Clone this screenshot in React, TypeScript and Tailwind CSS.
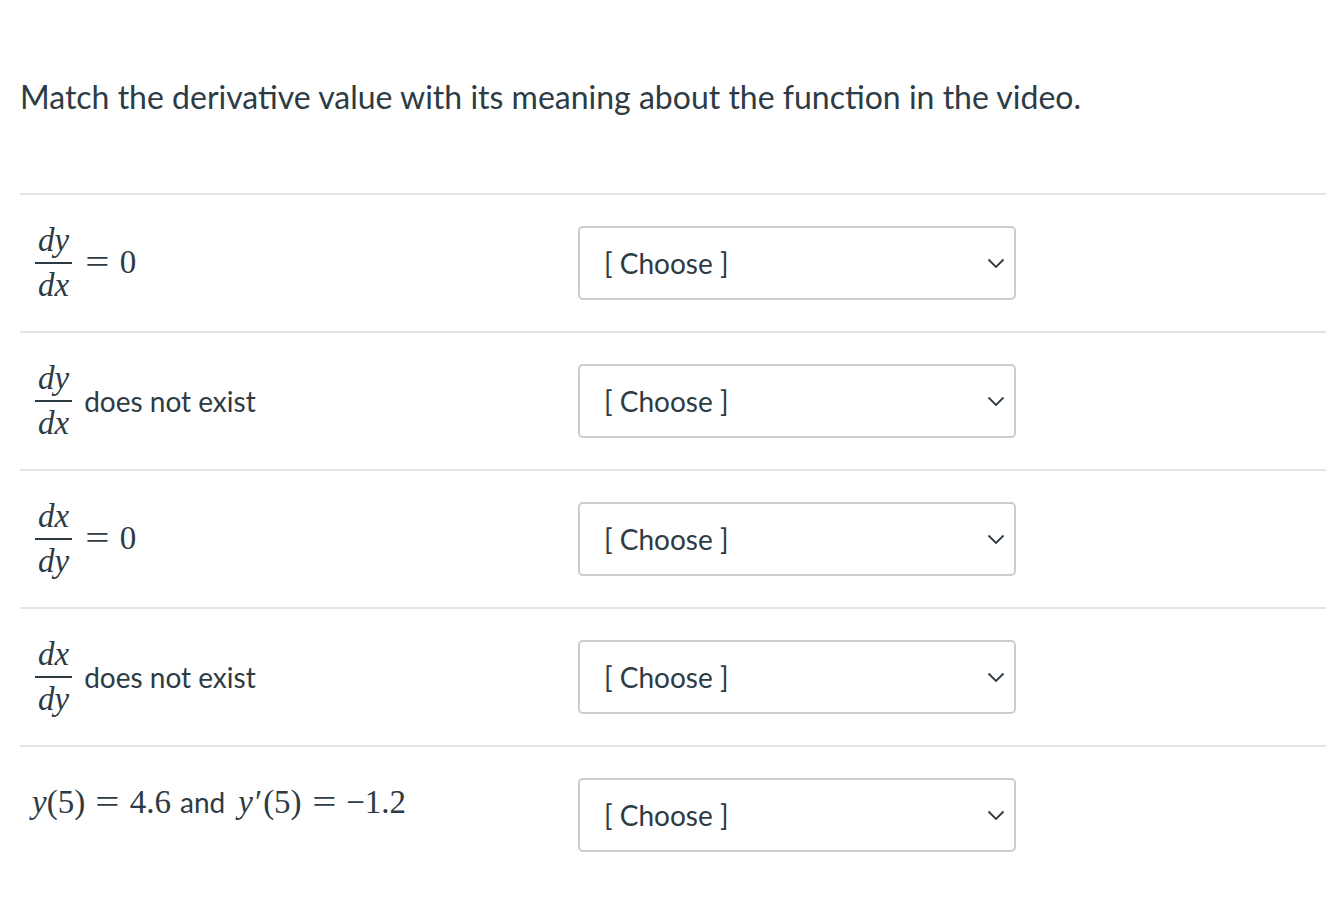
import React from "react";

const sans = { fontFamily: "Lato, 'Liberation Sans', sans-serif" };

const Frac = ({ top, bottom }: { top: string; bottom: string }) => (
  <span className="inline-flex flex-col items-center align-middle font-['Liberation_Serif',serif] italic text-[33px]">
    <span className="leading-none px-[3px] pb-[5px]">{top}</span>
    <span className="h-[1.5px] w-full bg-[#2d3b45]" />
    <span className="leading-none px-[3px] pt-[5px]">{bottom}</span>
  </span>
);

// math pieces, set in a serif face
const M = ({ children, italic }: { children: React.ReactNode; italic?: boolean }) => (
  <span className={`font-['Liberation_Serif',serif] text-[33px] ${italic ? "italic" : ""}`}>{children}</span>
);

const Eq = () => (
  <span className="mx-[13px] inline-block scale-x-[1.3] font-['Liberation_Serif',serif] text-[33px]">=</span>
);

const ChooseSelect = () => (
  <div className="flex h-[74px] w-[438px] shrink-0 items-center justify-between rounded-[5px] border-2 border-[#c7cdd1] bg-white pl-[24px] pr-[8px]">
    <span className="text-[28px] text-[#2d3b45]" style={sans}>
      [ Choose ]
    </span>
    <svg width="18" height="11" viewBox="0 0 18 11" fill="none" className="mr-[1px]">
      <path d="M1.5 1.5 L9 9 L16.5 1.5" stroke="#2d3b45" strokeWidth="1.8" />
    </svg>
  </div>
);

const rows: { left: React.ReactNode; lift?: boolean }[] = [
  {
    left: (
      <span className="flex items-center">
        <Frac top="dy" bottom="dx" />
        <span className="ml-[3px]">
          <Eq />
          <M>0</M>
        </span>
      </span>
    ),
  },
  {
    left: (
      <span className="flex items-center gap-[12px]">
        <Frac top="dy" bottom="dx" />
        <span className="text-[28px]" style={sans}>does not exist</span>
      </span>
    ),
  },
  {
    left: (
      <span className="flex items-center">
        <Frac top="dx" bottom="dy" />
        <span className="ml-[3px]">
          <Eq />
          <M>0</M>
        </span>
      </span>
    ),
  },
  {
    left: (
      <span className="flex items-center gap-[12px]">
        <Frac top="dx" bottom="dy" />
        <span className="text-[28px]" style={sans}>does not exist</span>
      </span>
    ),
  },
  {
    left: (
      <span className="whitespace-nowrap">
        <M italic>y</M>
        <M>(5)</M>
        <Eq />
        <M>4.6</M>
        <span className="mx-[9px] text-[28px]" style={sans}>and</span>
        <span className="ml-[4px]">
          <M italic>y′</M>
        </span>
        <span className="ml-[3px]">
          <M>(5)</M>
        </span>
        <Eq />
        <M>−1.2</M>
      </span>
    ),
    lift: true,
  },
];

export default function App() {
  return (
    <div className="min-h-screen bg-white pl-5 text-[#2d3b45]" style={sans}>
      <h1 className="pt-[76px] pb-[75px] text-[32px] font-normal leading-[42px]">
        Match the derivative value with its meaning about the function in the video.
      </h1>
      <div>
        {rows.map((row, i) => (
          <div key={i} className="flex h-[138px] items-center border-t-2 border-[#e2e4e6]">
            <div className={`w-[558px] shrink-0 ${row.lift ? "pl-[12px] pb-[24px]" : "pl-[15px]"}`}>
              {row.left}
            </div>
            <ChooseSelect />
          </div>
        ))}
      </div>
    </div>
  );
}
